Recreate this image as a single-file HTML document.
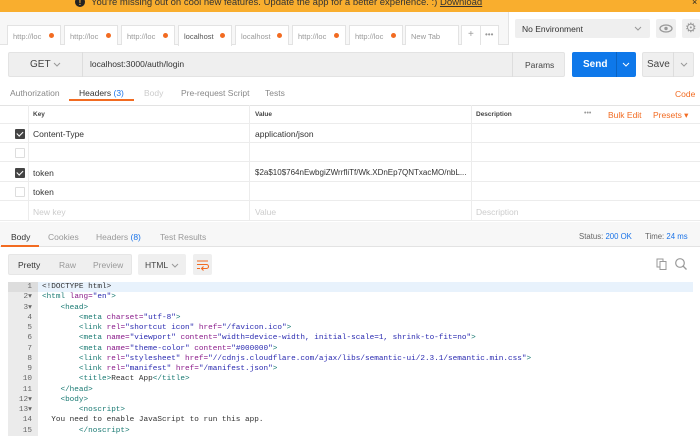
<!DOCTYPE html>
<html><head><style>
*{box-sizing:border-box;margin:0;padding:0}
body{width:700px;height:428px;overflow:hidden;background:#fff;font-family:"Liberation Sans",sans-serif;font-size:8px;color:#505050;position:relative}
.a{position:absolute}
.tab{position:absolute;top:25px;height:20px;width:54px;border:1px solid #e3e3e3;border-bottom:none;background:#fff;font-size:7.5px;color:#999;padding:6px 0 0 5px}
.tab i{position:absolute;right:6px;top:7px;width:5px;height:5px;border-radius:50%;background:#f26b21}
.cb{position:absolute;left:15px;width:10px;height:10px;border-radius:1px}
.cb.on{background:#444}
.cb.on:after{content:"";position:absolute;left:3px;top:1px;width:2.5px;height:5px;border:solid #fff;border-width:0 1.3px 1.3px 0;transform:rotate(45deg)}
.cb.off{border:1px solid #ddd}
.row{position:absolute;left:0;width:700px;height:19px;border-bottom:1px solid #ececec}
.code{position:absolute;left:8px;top:282px;width:685px;font-family:"Liberation Mono",monospace;font-size:7.7px;line-height:10.25px;color:#333}
.code div{white-space:pre}
.ln{display:inline-block;width:30px;background:#ebebeb;text-align:right;padding-right:6px;color:#666;margin-right:4px}
.t{color:#1a7a73}.at{color:#8a1a8a}.s{color:#2a2ab0}
.chev{position:absolute}
</style></head><body>
<div class="a" style="left:0;top:0;width:700px;height:12px;background:#f9ae2e"></div>
<div class="a" style="left:75px;top:-3px;width:10px;height:10px;border-radius:50%;background:#222;color:#f9ae2e;font-size:8px;text-align:center;line-height:12px;font-weight:bold">!</div>
<div class="a" style="left:91px;top:-3px;font-size:9.5px;color:#333;white-space:nowrap">You're missing out on cool new features. Update the app for a better experience. :) <u>Download</u></div>
<div class="a" style="left:692px;top:-3px;font-size:9px;color:#222">×</div>
<div class="a" style="left:0;top:12px;width:508px;height:33px;background:#f7f7f7;border-bottom:1px solid #e3e3e3"></div>
<div class="a" style="left:508px;top:12px;width:1px;height:33px;background:#e3e3e3"></div>
<div class="tab" style="left:7px">http://loc<i></i></div>
<div class="tab" style="left:64px">http://loc<i></i></div>
<div class="tab" style="left:121px">http://loc<i></i></div>
<div class="tab" style="left:178px;color:#555;height:21px">localhost<i></i></div>
<div class="tab" style="left:235px">localhost<i></i></div>
<div class="tab" style="left:292px">http://loc<i></i></div>
<div class="tab" style="left:349px">http://loc<i></i></div>
<div class="tab" style="left:405px">New Tab</div>
<div class="tab" style="left:461px;width:20px;font-size:10px;padding:3px 0 0 6px">+</div>
<div class="tab" style="left:480px;width:19px;font-size:8px;padding:4px 0 0 4px">•••</div>
<div class="a" style="left:515px;top:19px;width:135px;height:19px;background:#efefef;border-radius:2px;font-size:8.5px;color:#333;padding:5px 7px">No Environment</div>
<svg class="chev" style="left:634px;top:26px" width="8" height="5"><path d="M1 1L4 4L7 1" fill="none" stroke="#999"/></svg>
<div class="a" style="left:656px;top:19px;width:20px;height:19px;background:#efefef;border-radius:2px"><svg width="20" height="19"><ellipse cx="10" cy="9.5" rx="6" ry="3.5" fill="none" stroke="#999" stroke-width="1.3"/><circle cx="10" cy="9.5" r="1.7" fill="#999"/></svg></div>
<div class="a" style="left:682px;top:19px;width:18px;height:19px;background:#efefef;border-radius:2px;color:#999;font-size:13px;padding:1px 3px">⚙</div>
<div class="a" style="left:8px;top:52px;width:557px;height:25px;background:#efefef;border:1px solid #e3e3e3;border-radius:2px"></div>
<div class="a" style="left:82px;top:52px;width:1px;height:25px;background:#ddd"></div>
<div class="a" style="left:512px;top:52px;width:1px;height:25px;background:#ddd"></div>
<div class="a" style="left:30px;top:59px;font-size:10px;color:#444">GET</div>
<svg class="chev" style="left:53px;top:62px" width="8" height="5"><path d="M1 1L4 4L7 1" fill="none" stroke="#999"/></svg>
<div class="a" style="left:90px;top:59px;font-size:8.5px;color:#333">localhost:3000/auth/login</div>
<div class="a" style="left:525px;top:60px;font-size:8.5px;color:#444">Params</div>
<div class="a" style="left:572px;top:52px;width:64px;height:25px;background:#0e78ea;border-radius:2px"></div>
<div class="a" style="left:616px;top:52px;width:1px;height:25px;background:#0a63c3"></div>
<div class="a" style="left:583px;top:59px;font-size:10px;color:#fff;font-weight:bold">Send</div>
<svg class="chev" style="left:622px;top:62px" width="8" height="5"><path d="M1 1L4 4L7 1" fill="none" stroke="#fff"/></svg>
<div class="a" style="left:642px;top:52px;width:52px;height:25px;background:#efefef;border:1px solid #e3e3e3;border-radius:2px"></div>
<div class="a" style="left:673px;top:52px;width:1px;height:25px;background:#ddd"></div>
<div class="a" style="left:647px;top:59px;font-size:10px;color:#444">Save</div>
<svg class="chev" style="left:680px;top:62px" width="8" height="5"><path d="M1 1L4 4L7 1" fill="none" stroke="#999"/></svg>
<div class="a" style="left:10px;top:88px;font-size:8.5px;color:#888">Authorization</div>
<div class="a" style="left:79px;top:88px;font-size:8.5px;color:#333">Headers <span style="color:#1a73e8">(3)</span></div>
<div class="a" style="left:69px;top:99px;width:65px;height:2px;background:#f26b21"></div>
<div class="a" style="left:144px;top:88px;font-size:8.5px;color:#ccc">Body</div>
<div class="a" style="left:181px;top:88px;font-size:8.5px;color:#888">Pre-request Script</div>
<div class="a" style="left:265px;top:88px;font-size:8.5px;color:#888">Tests</div>
<div class="a" style="left:675px;top:89px;font-size:8.5px;color:#f26b21">Code</div>
<div class="row" style="top:105px;border-top:1px solid #e3e3e3"></div>
<div class="row" style="top:124px"></div><div class="row" style="top:143px"></div><div class="row" style="top:163px"></div><div class="row" style="top:182px"></div><div class="row" style="top:201px;height:20px"></div>
<div class="a" style="left:28px;top:105px;width:1px;height:116px;background:#ececec"></div>
<div class="a" style="left:249px;top:105px;width:1px;height:116px;background:#ececec"></div>
<div class="a" style="left:471px;top:105px;width:1px;height:116px;background:#ececec"></div>
<div class="a" style="left:33px;top:111px;font-size:6.5px;font-weight:bold;color:#444">Key</div>
<div class="a" style="left:255px;top:111px;font-size:6.5px;font-weight:bold;color:#444">Value</div>
<div class="a" style="left:476px;top:111px;font-size:6.5px;font-weight:bold;color:#444">Description</div>
<div class="a" style="left:584px;top:110px;font-size:7px;color:#999">•••</div>
<div class="a" style="left:608px;top:110px;font-size:8.5px;color:#f26b21">Bulk Edit</div>
<div class="a" style="left:653px;top:110px;font-size:8.5px;color:#f26b21">Presets ▾</div>
<div class="cb on" style="top:129px"></div><div class="cb off" style="top:148px"></div><div class="cb on" style="top:168px"></div><div class="cb off" style="top:187px"></div>
<div class="a" style="left:33px;top:129px;font-size:8.5px;color:#333">Content-Type</div>
<div class="a" style="left:255px;top:129px;font-size:8.5px;color:#333">application/json</div>
<div class="a" style="left:33px;top:168px;font-size:8.5px;color:#333">token</div>
<div class="a" style="left:255px;top:168px;font-size:8px;color:#333;white-space:nowrap">$2a$10$764nEwbgiZWrrfliTf/Wk.XDnEp7QNTxacMO/nbL...</div>
<div class="a" style="left:33px;top:187px;font-size:8.5px;color:#333">token</div>
<div class="a" style="left:33px;top:207px;font-size:8.5px;color:#ccc">New key</div>
<div class="a" style="left:255px;top:207px;font-size:8.5px;color:#ccc">Value</div>
<div class="a" style="left:476px;top:207px;font-size:8.5px;color:#ccc">Description</div>
<div class="a" style="left:0;top:222px;width:700px;height:25px;background:#f7f7f7;border-bottom:1px solid #e3e3e3"></div>
<div class="a" style="left:11px;top:232px;font-size:8.5px;color:#333">Body</div>
<div class="a" style="left:1px;top:245px;width:38px;height:2px;background:#f26b21"></div>
<div class="a" style="left:48px;top:232px;font-size:8.5px;color:#999">Cookies</div>
<div class="a" style="left:96px;top:232px;font-size:8.5px;color:#999">Headers <span style="color:#1a73e8">(8)</span></div>
<div class="a" style="left:160px;top:232px;font-size:8.5px;color:#999">Test Results</div>
<div class="a" style="left:579px;top:232px;font-size:7.8px;color:#666">Status: <span style="color:#1a73e8">200 OK</span></div>
<div class="a" style="left:645px;top:232px;font-size:7.8px;color:#666">Time: <span style="color:#1a73e8">24 ms</span></div>
<div class="a" style="left:8px;top:254px;width:124px;height:21px;background:#efefef;border-radius:2px;border:1px solid #e6e6e6"></div>
<div class="a" style="left:18px;top:260px;font-size:8.5px;color:#333">Pretty</div>
<div class="a" style="left:59px;top:260px;font-size:8.5px;color:#999">Raw</div>
<div class="a" style="left:93px;top:260px;font-size:8.5px;color:#999">Preview</div>
<div class="a" style="left:138px;top:254px;width:48px;height:21px;background:#efefef;border-radius:2px"></div>
<div class="a" style="left:145px;top:260px;font-size:8.5px;color:#444">HTML</div>
<svg class="chev" style="left:171px;top:263px" width="8" height="5"><path d="M1 1L4 4L7 1" fill="none" stroke="#999"/></svg>
<div class="a" style="left:193px;top:254px;width:19px;height:21px;background:#efefef;border-radius:2px"><svg width="19" height="21"><path d="M4 7H15M4 10.5H13.5a2 2 0 0 1 0 4H9M10.5 12.5L8.5 14.5L10.5 16.5M4 14.5H7" fill="none" stroke="#f26b21" stroke-width="1.1"/></svg></div>
<svg class="a" style="left:655px;top:257px" width="14" height="14"><rect x="2" y="2" width="6" height="8" fill="none" stroke="#999"/><rect x="5" y="4.5" width="6" height="8" fill="#fff" stroke="#999"/></svg>
<svg class="a" style="left:674px;top:257px" width="14" height="14"><circle cx="6" cy="6" r="4.3" fill="none" stroke="#999" stroke-width="1.2"/><path d="M9 9L12.5 12.5" stroke="#999" stroke-width="1.3"/></svg>
<div class="code">
<div style="background:#e8f2fc"><span class="ln" style="background:#ddd">1</span>&lt;!DOCTYPE html&gt;</div>
<div><span class="ln">2▾</span><span class="t">&lt;html</span> <span class="at">lang=</span><span class="s">"en"</span><span class="t">&gt;</span></div>
<div><span class="ln">3▾</span>    <span class="t">&lt;head&gt;</span></div>
<div><span class="ln">4</span>        <span class="t">&lt;meta</span> <span class="at">charset=</span><span class="s">"utf-8"</span><span class="t">&gt;</span></div>
<div><span class="ln">5</span>        <span class="t">&lt;link</span> <span class="at">rel=</span><span class="s">"shortcut icon"</span> <span class="at">href=</span><span class="s">"/favicon.ico"</span><span class="t">&gt;</span></div>
<div><span class="ln">6</span>        <span class="t">&lt;meta</span> <span class="at">name=</span><span class="s">"viewport"</span> <span class="at">content=</span><span class="s">"width=device-width, initial-scale=1, shrink-to-fit=no"</span><span class="t">&gt;</span></div>
<div><span class="ln">7</span>        <span class="t">&lt;meta</span> <span class="at">name=</span><span class="s">"theme-color"</span> <span class="at">content=</span><span class="s">"#000000"</span><span class="t">&gt;</span></div>
<div><span class="ln">8</span>        <span class="t">&lt;link</span> <span class="at">rel=</span><span class="s">"stylesheet"</span> <span class="at">href=</span><span class="s">"//cdnjs.cloudflare.com/ajax/libs/semantic-ui/2.3.1/semantic.min.css"</span><span class="t">&gt;</span></div>
<div><span class="ln">9</span>        <span class="t">&lt;link</span> <span class="at">rel=</span><span class="s">"manifest"</span> <span class="at">href=</span><span class="s">"/manifest.json"</span><span class="t">&gt;</span></div>
<div><span class="ln">10</span>        <span class="t">&lt;title&gt;</span>React App<span class="t">&lt;/title&gt;</span></div>
<div><span class="ln">11</span>    <span class="t">&lt;/head&gt;</span></div>
<div><span class="ln">12▾</span>    <span class="t">&lt;body&gt;</span></div>
<div><span class="ln">13▾</span>        <span class="t">&lt;noscript&gt;</span></div>
<div><span class="ln">14</span>  You need to enable JavaScript to run this app.</div>
<div><span class="ln">15</span>        <span class="t">&lt;/noscript&gt;</span></div>
</div>
</body></html>
